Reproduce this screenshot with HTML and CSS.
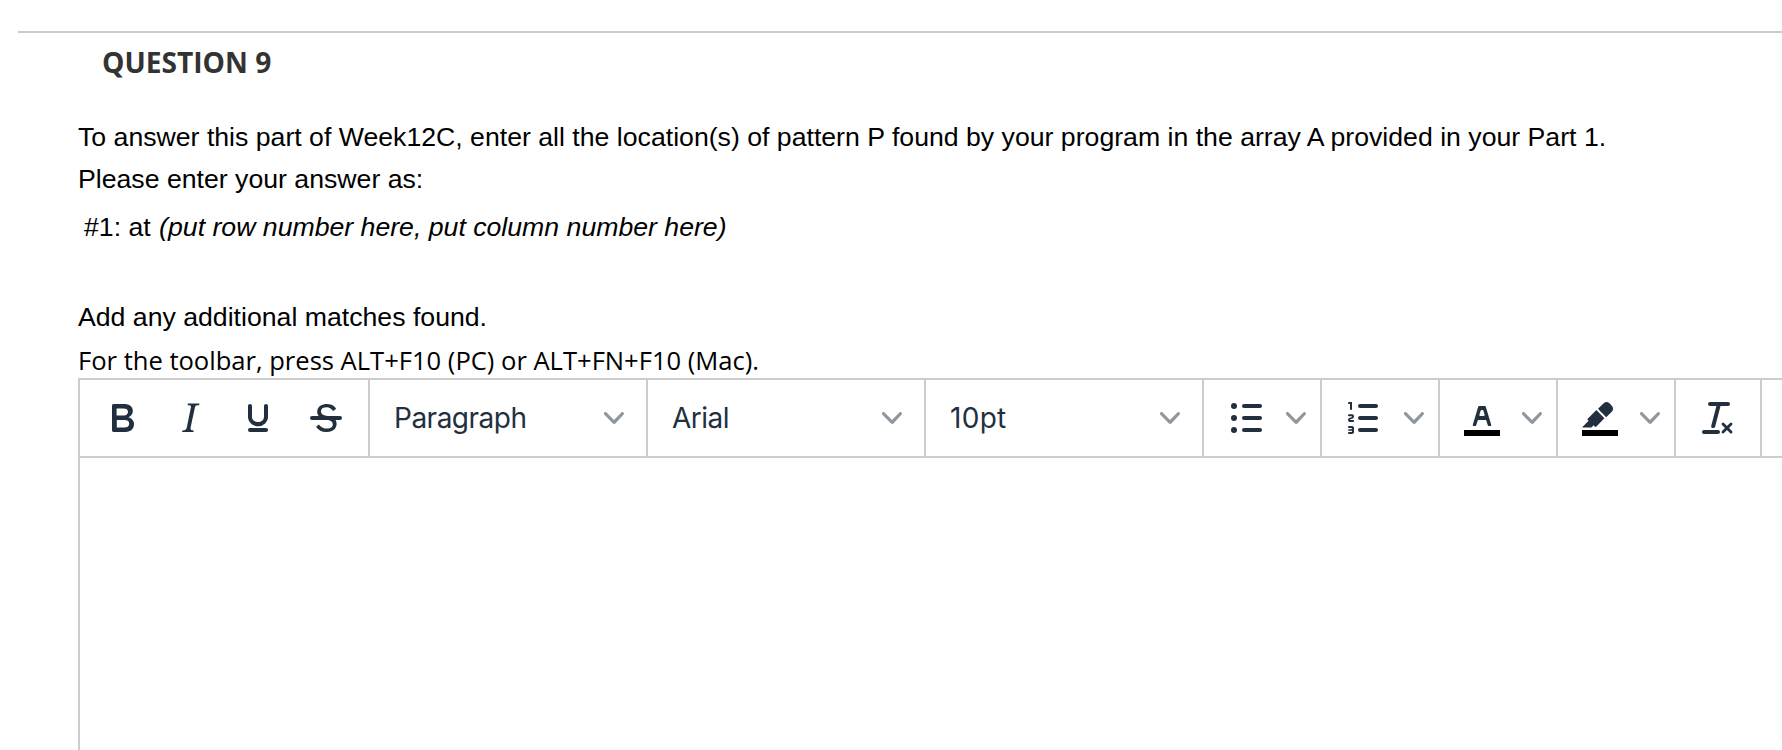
FILE: index.html
```html
<!DOCTYPE html>
<html lang="en">
<head>
  <meta charset="UTF-8">
  <meta name="viewport" content="width=device-width, initial-scale=1.0">
  <title>Question 9</title>
  <link rel="stylesheet" href="styles.css">
</head>
<body>
  <div class="question">
    <h3 class="question-title">QUESTION 9</h3>
    <div class="question-body">
      <p class="line line-intro">To answer this part of Week12C, enter all the location(s) of pattern P found by your program in the array A provided in your Part 1.</p>
      <p class="line line-please">Please enter your answer as:</p>
      <p class="line line-format">#1: at <em>(put row number here, put column number here)</em></p>
      <p class="line line-add">Add any additional matches found.</p>
      <div class="toolbar-hint">For the toolbar, press ALT+F10 (PC) or ALT+FN+F10 (Mac).</div>

      <div class="editor">
        <div class="toolbar">
          <div class="group">
            <button class="tool" aria-label="Bold">
              <svg class="icon" viewBox="0 0 24 24"><path fill-rule="evenodd" d="M7.8 19c-.3 0-.5 0-.6-.2l-.2-.5V5.7c0-.2 0-.4.2-.5l.6-.2h5c1.5 0 2.7.3 3.5 1 .7.6 1.1 1.4 1.1 2.5a3 3 0 0 1-.6 1.9c-.4.6-1 1-1.6 1.2.4.1.9.3 1.3.6s.8.7 1 1.2c.4.4.5 1 .5 1.6 0 1.3-.4 2.3-1.3 3-.8.7-2.1 1-3.8 1H7.8zm5-8.3c.6 0 1.2-.1 1.6-.5.4-.3.6-.7.6-1.3 0-1.1-.8-1.7-2.3-1.7H9.3v3.5h3.4zm.5 6c.7 0 1.3-.1 1.7-.4.4-.4.6-.9.6-1.5s-.2-1-.7-1.4c-.4-.3-1-.4-2-.4H9.4v3.8h4z"/></svg>
            </button>
            <button class="tool" aria-label="Italic">
              <svg class="icon" viewBox="0 0 24 24"><path d="M16.7 4.7l-.1.9h-.3c-.6 0-1 0-1.4.3-.3.3-.4.6-.5 1.1l-2.1 9.8v.6c0 .5.4.8 1.4.8h.2l-.2.8H8l.2-.8h.2c1.1 0 1.8-.5 2-1.5l2-9.8.1-.5c0-.6-.4-.8-1.4-.8h-.3l.2-.9h5.8z"/></svg>
            </button>
            <button class="tool" aria-label="Underline">
              <svg class="icon" viewBox="0 0 24 24"><path d="M16 5c.6 0 1 .4 1 1v5.5a4 4 0 0 1-.4 1.8l-1 1.4a5.3 5.3 0 0 1-5.5 1 5 5 0 0 1-1.6-1c-.5-.4-.8-.9-1.1-1.4a4 4 0 0 1-.4-1.8V6c0-.6.4-1 1-1s1 .4 1 1v5.5c0 .3 0 .6.2 1l.6.7a3.3 3.3 0 0 0 2.2.8 3.4 3.4 0 0 0 2.2-.8c.3-.2.4-.5.6-.8l.2-.9V6c0-.6.4-1 1-1zM8 17h8c.6 0 1 .4 1 1s-.4 1-1 1H8a1 1 0 0 1 0-2z"/></svg>
            </button>
            <button class="tool" aria-label="Strikethrough">
              <svg class="icon" viewBox="0 0 24 24"><path d="M15.6 8.5c-.5-.7-1-1.1-1.3-1.3-.6-.4-1.3-.6-2-.6-2.7 0-2.8 1.7-2.8 2.1 0 1.6 1.8 2 3.2 2.3 4.4.9 4.6 2.8 4.6 3.9 0 1.4-.7 4.1-5 4.1A6.2 6.2 0 0 1 7 16.4l1.5-1.1c.4.6 1.6 2 3.7 2 1.6 0 2.5-.4 3-1.2.4-.8.3-2-.8-2.6-.7-.4-1.6-.7-2.9-1-1-.2-3.9-.8-3.9-3.6C7.6 6 10.3 5 12.4 5c2.9 0 4.2 1.6 4.7 2.4l-1.5 1.1z"/><path d="M5 11h14a1 1 0 0 1 0 2H5a1 1 0 0 1 0-2z"/></svg>
            </button>
          </div>

          <button class="select">
            <span class="select-label">Paragraph</span>
            <svg class="chevron" viewBox="0 0 10 10"><path d="M8.7 2.2c.3-.3.8-.3 1 0 .4.4.4.9 0 1.2L5.7 7.8c-.3.3-.9.3-1.2 0L.2 3.4a.8.8 0 0 1 0-1.2c.3-.3.8-.3 1.1 0L5 6l3.7-3.8z"/></svg>
          </button>
          <button class="select">
            <span class="select-label">Arial</span>
            <svg class="chevron" viewBox="0 0 10 10"><path d="M8.7 2.2c.3-.3.8-.3 1 0 .4.4.4.9 0 1.2L5.7 7.8c-.3.3-.9.3-1.2 0L.2 3.4a.8.8 0 0 1 0-1.2c.3-.3.8-.3 1.1 0L5 6l3.7-3.8z"/></svg>
          </button>
          <button class="select">
            <span class="select-label select-size">10pt</span>
            <svg class="chevron" viewBox="0 0 10 10"><path d="M8.7 2.2c.3-.3.8-.3 1 0 .4.4.4.9 0 1.2L5.7 7.8c-.3.3-.9.3-1.2 0L.2 3.4a.8.8 0 0 1 0-1.2c.3-.3.8-.3 1.1 0L5 6l3.7-3.8z"/></svg>
          </button>

          <button class="split" aria-label="Bullet list">
            <svg class="icon" viewBox="0 0 24 24"><path d="M11 5h8c.6 0 1 .4 1 1s-.4 1-1 1h-8a1 1 0 0 1 0-2zm0 6h8c.6 0 1 .4 1 1s-.4 1-1 1h-8a1 1 0 0 1 0-2zm0 6h8c.6 0 1 .4 1 1s-.4 1-1 1h-8a1 1 0 0 1 0-2z"/><circle cx="6" cy="6" r="1.5"/><circle cx="6" cy="12" r="1.5"/><circle cx="6" cy="18" r="1.5"/></svg>
            <svg class="chevron" viewBox="0 0 10 10"><path d="M8.7 2.2c.3-.3.8-.3 1 0 .4.4.4.9 0 1.2L5.7 7.8c-.3.3-.9.3-1.2 0L.2 3.4a.8.8 0 0 1 0-1.2c.3-.3.8-.3 1.1 0L5 6l3.7-3.8z"/></svg>
          </button>
          <button class="split" aria-label="Numbered list">
            <svg class="icon" viewBox="0 0 24 24"><path d="M10 17h8c.6 0 1 .4 1 1s-.4 1-1 1h-8a1 1 0 0 1 0-2zm0-6h8c.6 0 1 .4 1 1s-.4 1-1 1h-8a1 1 0 0 1 0-2zm0-6h8c.6 0 1 .4 1 1s-.4 1-1 1h-8a1 1 0 1 1 0-2zM6 4v3.5c0 .3-.2.5-.5.5a.5.5 0 0 1-.5-.5V5h-.5a.5.5 0 0 1 0-1H6zm-1 8.8l.2.2h1.3c.3 0 .5.2.5.5s-.2.5-.5.5H4.9a1 1 0 0 1-.9-1V13c0-.4.3-.8.6-1l1.2-.4.2-.3a.2.2 0 0 0-.2-.2H4.5a.5.5 0 0 1-.5-.5c0-.3.2-.5.5-.5h1.6c.5 0 .9.4.9 1v.1c0 .4-.3.8-.6 1l-1.2.4-.2.3zM7 17v2c0 .6-.4 1-1 1H4.5a.5.5 0 0 1 0-1h1.2c.2 0 .3-.1.3-.3 0-.2-.1-.3-.3-.3H4.4a.4.4 0 1 1 0-.8h1.3c.2 0 .3-.1.3-.3 0-.2-.1-.3-.3-.3H4.5a.5.5 0 1 1 0-1H6c.6 0 1 .4 1 1z"/></svg>
            <svg class="chevron" viewBox="0 0 10 10"><path d="M8.7 2.2c.3-.3.8-.3 1 0 .4.4.4.9 0 1.2L5.7 7.8c-.3.3-.9.3-1.2 0L.2 3.4a.8.8 0 0 1 0-1.2c.3-.3.8-.3 1.1 0L5 6l3.7-3.8z"/></svg>
          </button>
          <button class="split" aria-label="Text color">
            <svg class="icon" viewBox="0 0 24 24"><path class="swatch" d="M3 18h18v3H3z"/><path d="M8.7 16h-.8a.5.5 0 0 1-.5-.6l2.7-9c.1-.3.3-.4.5-.4h2.8c.2 0 .4.1.5.4l2.7 9a.5.5 0 0 1-.5.6h-.8a.5.5 0 0 1-.4-.4l-.7-2.2c0-.3-.3-.4-.5-.4h-3.4c-.2 0-.4.1-.5.4l-.7 2.2c0 .3-.2.4-.4.4zm2.6-7.6l-.6 2a.5.5 0 0 0 .5.6h1.6a.5.5 0 0 0 .5-.6l-.6-2c0-.3-.3-.4-.5-.4h-.4c-.2 0-.4.1-.5.4z"/></svg>
            <svg class="chevron" viewBox="0 0 10 10"><path d="M8.7 2.2c.3-.3.8-.3 1 0 .4.4.4.9 0 1.2L5.7 7.8c-.3.3-.9.3-1.2 0L.2 3.4a.8.8 0 0 1 0-1.2c.3-.3.8-.3 1.1 0L5 6l3.7-3.8z"/></svg>
          </button>
          <button class="split" aria-label="Highlight color">
            <svg class="icon" viewBox="0 0 24 24"><path class="swatch" d="M3 18h18v3H3z"/><path fill-rule="evenodd" d="M7.7 16.7H3l3.3-3.3-.7-.8L10.2 8l4 4.1-4 4.2c-.2.2-.6.2-.8 0l-.6-.7-1.1 1.1zm5-7.5L11 7.4l3-2.9a2 2 0 0 1 2.6 0L18 6c.7.7.7 2 0 2.7l-2.9 2.9-1.8-1.8-.5-.6"/></svg>
            <svg class="chevron" viewBox="0 0 10 10"><path d="M8.7 2.2c.3-.3.8-.3 1 0 .4.4.4.9 0 1.2L5.7 7.8c-.3.3-.9.3-1.2 0L.2 3.4a.8.8 0 0 1 0-1.2c.3-.3.8-.3 1.1 0L5 6l3.7-3.8z"/></svg>
          </button>

          <div class="group">
            <button class="tool" aria-label="Clear formatting">
              <svg class="icon" viewBox="0 0 24 24"><path fill-rule="evenodd" d="M13.2 6a1 1 0 0 1 0 .2l-2.6 10a1 1 0 0 1-1 .8h-.2a.8.8 0 0 1-.8-1l2.6-10H8a1 1 0 1 1 0-2h9a1 1 0 0 1 0 2h-3.8zM5 18h7a1 1 0 0 1 0 2H5a1 1 0 0 1 0-2zm13 1.5L16.5 18 15 19.5a.7.7 0 0 1-1-1l1.5-1.5-1.5-1.5a.7.7 0 0 1 1-1l1.5 1.5 1.5-1.5a.7.7 0 0 1 1 1L17.5 17l1.5 1.5a.7.7 0 0 1-1 1z"/></svg>
            </button>
          </div>
        </div>
        <div class="edit-area"></div>
      </div>
    </div>
  </div>
</body>
</html>
```
FILE: styles.css
```css
* {
  box-sizing: border-box;
}
body {
  margin: 0;
  height: 750px;
  overflow: hidden;
  background-color: #fff;
  color: #000;
}
.question {
  margin: 31px 0 0 18px;
  border-top: 2px solid #ccc;
}
.question-title {
  margin: 9px 0 0 84px;
  font: bold 28.16px/40px "Open Sans", sans-serif;
  color: #333;
}
.question-body {
  margin-left: 60px;
  padding-top: 34px;
}
.line {
  margin: 0;
  font: 26.67px/42px "Liberation Sans", Arial, sans-serif;
  white-space: nowrap;
}
.line-format {
  margin-top: 6px;
  padding-left: 6px;
}
.line-format em {
  margin-left: 1px;
}
.line-add {
  margin-top: 48px;
}
.toolbar-hint {
  height: 40px;
  font: 25.6px/45px "Open Sans", sans-serif;
  letter-spacing: -0.02px;
  white-space: nowrap;
}

/* rich text editor */
.editor {
  height: 400px;
  border: 2px solid #ccc;
  border-right: none;
  overflow: hidden;
}
.toolbar {
  display: flex;
  height: 78px;
  border-bottom: 2px solid #ccc;
}
button {
  margin: 0;
  padding: 0;
  border: none;
  background: none;
  color: #222f3e;
}
.group,
.select,
.split {
  display: flex;
  flex: none;
  align-items: center;
  border-right: 2px solid #ccc;
}
.group {
  padding: 0 8px;
}
.tool {
  display: flex;
  align-items: center;
  justify-content: center;
  width: 68px;
  height: 68px;
}
.select {
  justify-content: space-between;
  width: 278px;
  padding: 0 22px 0 24px;
}
.select-label {
  font: 28px/36px Inter, sans-serif;
  letter-spacing: -0.5px;
}
.select-size {
  letter-spacing: 0.3px;
}
.split {
  justify-content: space-between;
  width: 118px;
  padding: 0 14px 0 18px;
}
.icon {
  display: block;
  width: 48px;
  height: 48px;
  fill: #222f3e;
}
.swatch {
  fill: #000;
}
.chevron {
  display: block;
  width: 20px;
  height: 20px;
  fill: #222f3e;
  opacity: .5;
}
```
